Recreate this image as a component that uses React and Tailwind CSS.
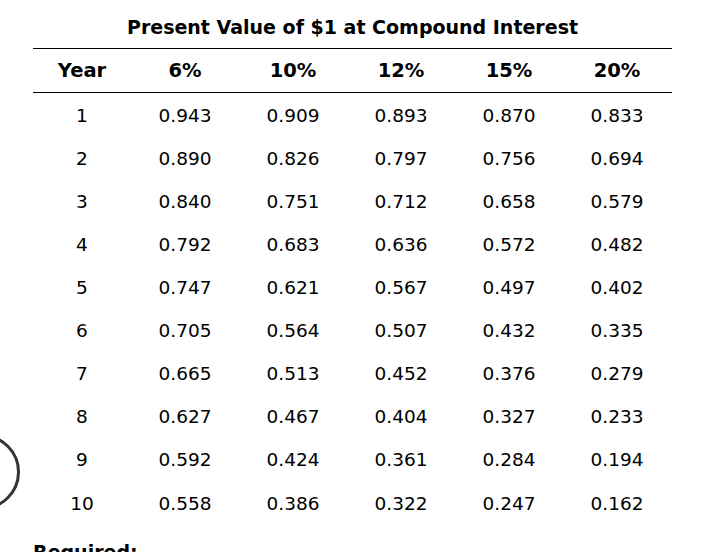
import React from "react";

const cols = ["6%", "10%", "12%", "15%", "20%"];
const rows = [
  [1, "0.943", "0.909", "0.893", "0.870", "0.833"],
  [2, "0.890", "0.826", "0.797", "0.756", "0.694"],
  [3, "0.840", "0.751", "0.712", "0.658", "0.579"],
  [4, "0.792", "0.683", "0.636", "0.572", "0.482"],
  [5, "0.747", "0.621", "0.567", "0.497", "0.402"],
  [6, "0.705", "0.564", "0.507", "0.432", "0.335"],
  [7, "0.665", "0.513", "0.452", "0.376", "0.279"],
  [8, "0.627", "0.467", "0.404", "0.327", "0.233"],
  [9, "0.592", "0.424", "0.361", "0.284", "0.194"],
  [10, "0.558", "0.386", "0.322", "0.247", "0.162"],
];

export default function App() {
  return (
    <div
      className="relative w-[714px] h-[552px] overflow-hidden bg-white text-black"
      style={{ fontFamily: '"DejaVu Sans", Verdana, sans-serif' }}
    >
      <div className="absolute left-[-56px] top-[434px] w-[76px] h-[76px] rounded-full border-[3px] border-[#333333]" />
      <div className="pl-[33px] w-[672px]">
        <div className="h-[48px] pt-[13px] text-center text-[19px] font-bold leading-[28px]">
          Present Value of $1 at Compound Interest
        </div>
        <div className="border-t border-black" />
        <div className="grid grid-cols-[98px_repeat(5,108px)] h-[43px] items-center text-center text-[19.5px] font-bold">
          <div>Year</div>
          {cols.map((c) => (
            <div key={c}>{c}</div>
          ))}
        </div>
        <div className="border-t border-black" />
        <div className="pt-[1px]">
          {rows.map((r) => (
            <div
              key={r[0]}
              className="grid grid-cols-[98px_repeat(5,108px)] h-[43.1px] items-center text-center text-[18.5px]"
            >
              {r.map((v, i) => (
                <div key={i}>{v}</div>
              ))}
            </div>
          ))}
        </div>
        <div className="mt-[13px] text-[19px] font-bold">Required:</div>
      </div>
    </div>
  );
}
